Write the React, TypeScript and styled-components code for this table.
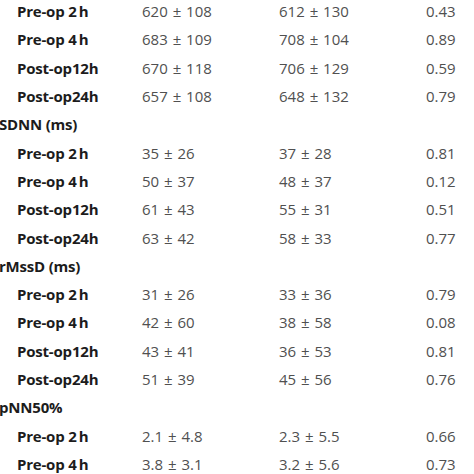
import React from "react";
import styled, { createGlobalStyle } from "styled-components";

const GlobalStyle = createGlobalStyle`
  html, body {
    margin: 0;
    padding: 0;
    background: #ffffff;
    overflow: hidden;
  }
`;

const Table = styled.div`
  display: grid;
  grid-template-columns: 143px 137px 146px 1fr;
  grid-auto-rows: 28.3px;
  width: 474px;
  margin-top: -3px;
  margin-left: -1px;
  font-family: "Open Sans", "Noto Sans", sans-serif;
  font-size: 15px;
  color: #505050;
`;

const Cell = styled.div`
  display: flex;
  align-items: center;
  white-space: nowrap;
  word-spacing: 1px;
`;

const Label = styled(Cell)`
  padding-left: 18px;
  font-weight: 700;
  color: #1c1c1c;
  letter-spacing: -0.2px;
  word-spacing: 0;
`;

const Section = styled.div`
  grid-column: 1 / -1;
  display: flex;
  align-items: center;
  font-weight: 700;
  color: #1c1c1c;
  letter-spacing: -0.2px;
`;

const PValue = styled(Cell)`
  padding-left: 1px;
`;

type Row = { label: string; a: string; b: string; p: string };
type Group = { title?: string; rows: Row[] };

const groups: Group[] = [
  {
    rows: [
      { label: "Pre-op 2\u2009h", a: "620 ± 108", b: "612 ± 130", p: "0.43" },
      { label: "Pre-op 4\u2009h", a: "683 ± 109", b: "708 ± 104", p: "0.89" },
      { label: "Post-op12h", a: "670 ± 118", b: "706 ± 129", p: "0.59" },
      { label: "Post-op24h", a: "657 ± 108", b: "648 ± 132", p: "0.79" },
    ],
  },
  {
    title: "SDNN (ms)",
    rows: [
      { label: "Pre-op 2\u2009h", a: "35 ± 26", b: "37 ± 28", p: "0.81" },
      { label: "Pre-op 4\u2009h", a: "50 ± 37", b: "48 ± 37", p: "0.12" },
      { label: "Post-op12h", a: "61 ± 43", b: "55 ± 31", p: "0.51" },
      { label: "Post-op24h", a: "63 ± 42", b: "58 ± 33", p: "0.77" },
    ],
  },
  {
    title: "rMssD (ms)",
    rows: [
      { label: "Pre-op 2\u2009h", a: "31 ± 26", b: "33 ± 36", p: "0.79" },
      { label: "Pre-op 4\u2009h", a: "42 ± 60", b: "38 ± 58", p: "0.08" },
      { label: "Post-op12h", a: "43 ± 41", b: "36 ± 53", p: "0.81" },
      { label: "Post-op24h", a: "51 ± 39", b: "45 ± 56", p: "0.76" },
    ],
  },
  {
    title: "pNN50%",
    rows: [
      { label: "Pre-op 2\u2009h", a: "2.1 ± 4.8", b: "2.3 ± 5.5", p: "0.66" },
      { label: "Pre-op 4\u2009h", a: "3.8 ± 3.1", b: "3.2 ± 5.6", p: "0.73" },
    ],
  },
];

export default function App() {
  return (
    <>
      <GlobalStyle />
      <Table>
        {groups.map((group, gi) => (
          <React.Fragment key={gi}>
            {group.title && <Section>{group.title}</Section>}
            {group.rows.map((row, ri) => (
              <React.Fragment key={ri}>
                <Label>{row.label}</Label>
                <Cell>{row.a}</Cell>
                <Cell>{row.b}</Cell>
                <PValue>{row.p}</PValue>
              </React.Fragment>
            ))}
          </React.Fragment>
        ))}
      </Table>
    </>
  );
}
